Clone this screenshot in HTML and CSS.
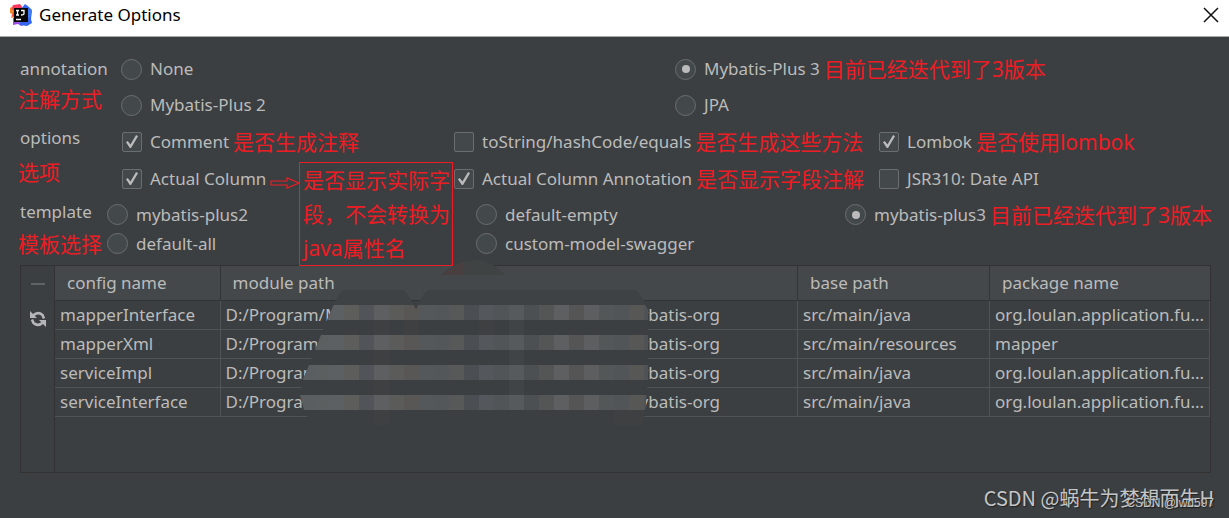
FILE: index.html
```html
<!DOCTYPE html>
<html lang="zh-CN">
<head>
<meta charset="utf-8">
<title>Generate Options</title>
<link rel="stylesheet" href="styles.css">
</head>
<body>
<header class="titlebar">
  <svg class="logo" viewBox="0 0 22 22" aria-hidden="true">
    <path fill="#f9862b" d="M0 4 3 2 8 6 6 13 1 14 2 10 0 9Z"/>
    <path fill="#fb3a61" d="M3 1 10 0 13 4 8 14 2 12 4 7 2 5Z"/>
    <path fill="#9a4fe0" d="M3 14 12 12 14 21 11 22 8 20 3 21Z"/>
    <path fill="#3467ee" d="M11 5 15 0 19 3 22 6 21 15 22 19 17 22 10 21Z"/>
    <path fill="#3f7cf5" d="M17 5 22 6 21 12 18 14Z"/>
    <path fill="#050505" d="M4 4H18V18H4Z"/>
    <path fill="none" stroke="#fff" stroke-width="1.3" d="M6 6.5H9M7.5 6.5V11M6 11H9M11 6.500H14V9.500Q14 11 11 11M6 15.500H11"/>
  </svg>
  <h1 class="title">Generate Options</h1>
  <button class="close" type="button" aria-label="Close">
    <svg viewBox="0 0 16 16" width="16" height="16"><path d="M1 1 15 15M15 1 1 15" fill="none" stroke="#111" stroke-width="1.500"/></svg>
  </button>
</header>

<main class="dialog">
  <section class="group annotation">
    <div class="side"><span class="name">annotation</span><span class="note">注解方式</span></div>
    <div class="choices">
      <div class="choice"><label><input type="radio" name="annotation">None</label></div>
      <div class="choice"><label><input type="radio" name="annotation" checked>Mybatis-Plus 3</label><span class="note">目前已经迭代到了3版本</span></div>
      <div class="choice"><label><input type="radio" name="annotation">Mybatis-Plus 2</label></div>
      <div class="choice"><label><input type="radio" name="annotation">JPA</label></div>
    </div>
  </section>

  <section class="group options">
    <div class="side"><span class="name">options</span><span class="note">选项</span></div>
    <div class="choices">
      <div class="choice"><label><input type="checkbox" checked>Comment</label><span class="note">是否生成注释</span></div>
      <div class="choice"><label><input type="checkbox">toString/hashCode/equals</label><span class="note">是否生成这些方法</span></div>
      <div class="choice"><label><input type="checkbox" checked>Lombok</label><span class="note">是否使用lombok</span></div>
      <div class="choice"><label><input type="checkbox" checked>Actual Column</label>
        <p class="callout note">
          <svg class="arrow" viewBox="0 0 30 12" aria-hidden="true"><path d="M1 4H17V1L29 6 17 11V8H1Z" fill="none" stroke="#ed1c24" stroke-width="1.200"/></svg>
          是否显示实际字段，不会转换为java属性名
        </p>
      </div>
      <div class="choice"><label><input type="checkbox" checked>Actual Column Annotation</label><span class="note">是否显示字段注解</span></div>
      <div class="choice"><label><input type="checkbox">JSR310: Date API</label></div>
    </div>
  </section>

  <section class="group template">
    <div class="side"><span class="name">template</span><span class="note">模板选择</span></div>
    <div class="choices">
      <div class="choice"><label><input type="radio" name="template">mybatis-plus2</label></div>
      <div class="choice"><label><input type="radio" name="template">default-empty</label></div>
      <div class="choice"><label><input type="radio" name="template" checked>mybatis-plus3</label><span class="note">目前已经迭代到了3版本</span></div>
      <div class="choice"><label><input type="radio" name="template">default-all</label></div>
      <div class="choice"><label><input type="radio" name="template">custom-model-swagger</label></div>
    </div>
  </section>

  <section class="panel">
    <div class="tools">
      <button type="button" aria-label="Remove"><svg width="18" height="18" viewBox="0 0 18 18"><path d="M2 9H16" stroke="#606365" stroke-width="2"/></svg></button>
      <button type="button" aria-label="Refresh"><svg width="18" height="18" viewBox="0 0 18 18" fill="none" stroke="#b4b6b8" stroke-width="2.600"><path d="M4 5.500Q9 1 13.500 5L15 8.500"/><path d="M14 12.500Q9 17 4.500 13L3 9.500"/><path d="M1 1V8H8ZM17 17V10H10Z" fill="#b4b6b8" stroke="none"/></svg></button>
    </div>
    <table class="configs">
      <colgroup><col class="c-name"><col class="c-module"><col class="c-base"><col class="c-package"></colgroup>
      <thead><tr><th>config name</th><th>module path</th><th>base path</th><th>package name</th></tr></thead>
      <tbody>
        <tr><td>mapperInterface</td><td><div class="path"><span>D:/Program/M</span><span class="tail">ybatis-org</span></div></td><td>src/main/java</td><td>org.loulan.application.fu...</td></tr>
        <tr><td>mapperXml</td><td><div class="path"><span>D:/Program/</span><span class="tail">ybatis-org</span></div></td><td>src/main/resources</td><td>mapper</td></tr>
        <tr><td>serviceImpl</td><td><div class="path"><span>D:/Program</span><span class="tail">ybatis-org</span></div></td><td>src/main/java</td><td>org.loulan.application.fu...</td></tr>
        <tr><td>serviceInterface</td><td><div class="path"><span>D:/Program</span><span class="tail">ybatis-org</span></div></td><td>src/main/java</td><td>org.loulan.application.fu...</td></tr>
      </tbody>
    </table>
    <svg class="mosaic" viewBox="299 259 350 166" aria-hidden="true">
      <defs>
        <clipPath id="blot"><path d="M345 290H402Q407 292 410 299L416 309 421 299Q425 291 431 290H635Q640 293 643 300L648 310V380L645 412 643 425H312L304 410 300 395 302 382 309 365 325 325 334 304Q338 294 345 290Z"/></clipPath>
        <g id="band">
          <path fill="#5a5e60" d="M299 0h15v15h-15z"/><path fill="#5c5f60" d="M314 0h15v15h-15z"/><path fill="#5d6062" d="M329 0h15v15h-15z"/><path fill="#5d5e5c" d="M344 0h15v15h-15z"/>
          <path fill="#515559" d="M359 0h15v15h-15z"/><path fill="#5e5f60" d="M374 0h15v15h-15z"/><path fill="#5b5c5a" d="M389 0h15v15h-15z"/><path fill="#585755" d="M404 0h15v15h-15z"/>
          <path fill="#55585b" d="M419 0h15v15h-15z"/><path fill="#53575a" d="M434 0h15v15h-15z"/><path fill="#575958" d="M449 0h15v15h-15z"/><path fill="#4b4f53" d="M464 0h15v15h-15z"/>
          <path fill="#54575b" d="M479 0h15v15h-15z"/><path fill="#515558" d="M494 0h15v15h-15z"/><path fill="#565a5d" d="M509 0h15v15h-15z"/><path fill="#4c5053" d="M524 0h15v15h-15z"/>
          <path fill="#545555" d="M539 0h15v15h-15z"/><path fill="#5e5f60" d="M554 0h15v15h-15z"/><path fill="#555555" d="M569 0h15v15h-15z"/><path fill="#5d5e5f" d="M584 0h15v15h-15z"/>
          <path fill="#535758" d="M599 0h15v15h-15z"/><path fill="#515558" d="M614 0h15v15h-15z"/><path fill="#575855" d="M629 0h15v15h-15z"/><path fill="#4f5355" d="M644 0h15v15h-15z"/>
        </g>
      </defs>
      <path fill="#404344" d="M441 275Q456 260 475 260 493 261 505 275Z"/>
      <path fill="#493e40" d="M441 275Q452 266 464 262V275Z"/>
      <g clip-path="url(#blot)">
        <path fill="#3c3f41" d="M299 290H659V425H299Z"/>
        <path fill="#3f4244" d="M299 290H659V305H299Z"/>
        <path fill="#3f4041" d="M374 320h15v105h-15zM404 320h15v30h-15zM479 320h15v15h-15zM614 410h30v15h-30z"/>
        <path fill="#404446" d="M509 320h15v90h-15z"/>
        <use href="#band" y="305"/><use href="#band" y="335"/><use href="#band" y="365"/><use href="#band" y="395"/>
      </g>
    </svg>
  </section>
</main>
<footer class="marks"><span class="mark">CSDN @蜗牛为梦想而生H</span><span class="mark-small">CSDN @lwd597</span></footer>
</body>
</html>
```
FILE: styles.css
```css
* { box-sizing: border-box; }
body {
  margin: 0;
  min-height: 100vh;
  position: relative;
  background: #3c3f41;
  color: #bbb;
  font: 17px/24px "Noto Sans", "Noto Sans CJK SC", sans-serif;
  white-space: nowrap;
}
button { padding: 0; border: 0; background: none; display: flex; }

.titlebar {
  display: flex;
  align-items: center;
  height: 37px;
  padding: 0 10px 6px;
  gap: 7px;
  background: #fff;
  color: #000;
  border-bottom: 1px solid #a8a8a8;
}
.logo { width: 22px; height: 22px; }
.title { margin: 0; font-size: 17px; font-weight: 400; }
.close { margin-left: auto; }

.dialog { padding: 14px 0 0 20px; }
.group { display: flex; }
.side { display: flex; flex-direction: column; flex: none; }
.choices { display: grid; flex: 1; }
.choice { display: flex; align-items: center; gap: 4px; position: relative; min-width: 0; }
.choice label { display: flex; align-items: center; gap: 8px; }
.note { color: #ed1c24; font-size: 21px; line-height: 28px; }

.annotation .side { width: 101px; padding-top: 6px; gap: 4px; }
.annotation .choices { grid-template-columns: 1fr 1fr; grid-auto-rows: 36px; }
.options .side { width: 102px; padding-top: 3px; gap: 8px; }
.options .choices { grid-template-columns: 332fr 425fr 350fr; grid-auto-rows: 37px; }
.template { padding: 3px 15px 0 0; }
.template .side { width: 87px; gap: 6px; }
.template .choices { grid-template-columns: repeat(3, 1fr); grid-auto-rows: 29px; }
.side .note { margin-left: -2px; }

input {
  appearance: none;
  flex: none;
  display: grid;
  place-items: center;
  margin: 0;
  border: 1px solid #6b6e70;
  background: #43494a;
}
input[type="radio"] { width: 21px; height: 21px; border-radius: 50%; }
input[type="checkbox"] { width: 20px; height: 20px; border-radius: 2px; }
input:checked::before { content: ""; background: #bbb; }
input[type="radio"]:checked::before { width: 8px; height: 8px; border-radius: 50%; }
input[type="checkbox"]:checked::before {
  width: 12px;
  height: 14px;
  clip-path: polygon(0 55%, 14% 46%, 37% 72%, 84% 4%, 100% 12%, 42% 96%, 32% 96%);
}

.callout {
  position: absolute;
  z-index: 2;
  left: 177px;
  top: 2px;
  width: 154px;
  margin: 0;
  padding: 0 0 0 3px;
  border: 1px solid #ed1c24;
  line-height: 34px;
  white-space: normal;
}
.arrow { position: absolute; right: 100%; top: 14px; width: 30px; height: 12px; }

.panel {
  position: relative;
  display: flex;
  align-items: flex-start;
  min-height: 208px;
  margin: 7px 18px 0 0;
  border: 1px solid #323232;
}
.tools {
  align-self: stretch;
  flex: none;
  display: flex;
  flex-direction: column;
  align-items: center;
  gap: 17px;
  width: 34px;
  padding-top: 9px;
  border-right: 1px solid #323232;
}
.configs { flex: 1; width: 0; table-layout: fixed; border-collapse: collapse; }
.c-name { width: 165px; }
.c-base { width: 192px; }
.c-package { width: 220px; }
.configs th {
  height: 34px;
  padding: 0 12px;
  text-align: left;
  font-weight: 400;
  background: #45484a;
  border: solid #323536;
  border-width: 0 1px 1px 0;
}
.configs th:last-child { border-right: 0; }
.configs td {
  height: 29px;
  padding: 0 5px;
  border: solid #515456;
  border-width: 0 1px 1px 0;
}
.path { display: flex; }
.tail { margin-left: auto; padding-right: 72px; }
.mosaic { position: absolute; left: 278px; top: -7px; width: 350px; height: 166px; }

.marks {
  position: absolute;
  right: 15px;
  bottom: 5px;
  color: #c4c6c7;
  font-family: "Noto Sans CJK SC", sans-serif;
  text-shadow: 1px 1px 1px #222;
}
.mark { font-size: 20px; line-height: 30px; }
.mark-small { position: absolute; right: 0; bottom: 0; font-family: "Liberation Sans", sans-serif; font-size: 12px; line-height: 20px; }
```
